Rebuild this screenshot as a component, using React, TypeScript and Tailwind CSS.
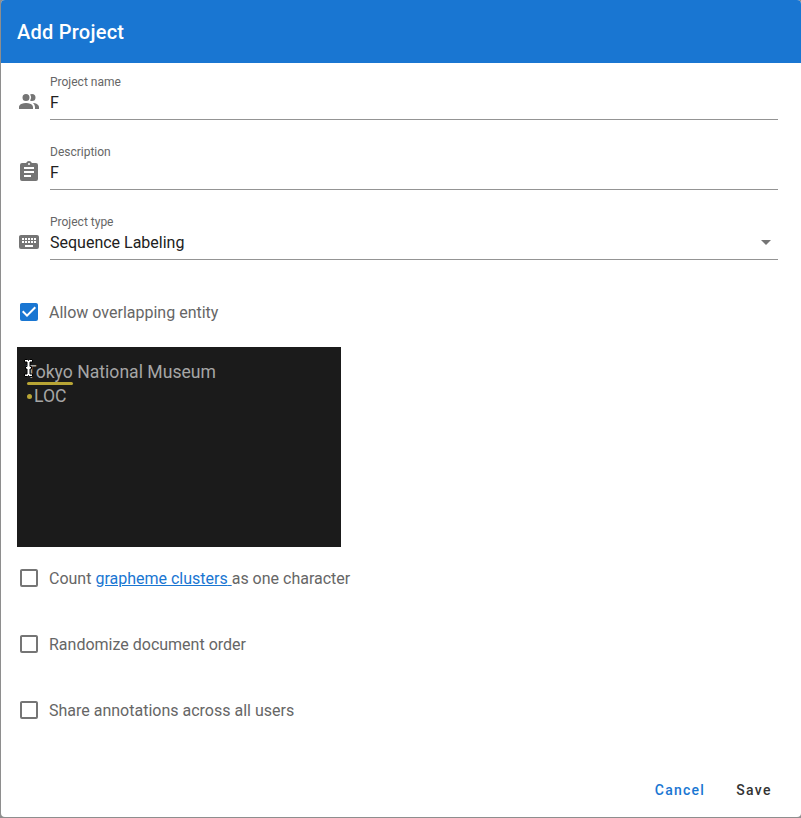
import React from "react";

const ICON = "#757575";

function MdiIcon({ d, color = ICON, size = 24 }: { d: string; color?: string; size?: number }) {
  return (
    <svg width={size} height={size} viewBox="0 0 24 24" className="block">
      <path d={d} fill={color} />
    </svg>
  );
}

const P_ACCOUNTS =
  "M16 17V19H2V17S2 13 9 13 16 17 16 17M12.5 7.5A3.5 3.5 0 1 0 9 11A3.5 3.5 0 0 0 12.5 7.5M15.94 13A5.32 5.32 0 0 1 18 17V19H22V17S22 13.37 15.94 13M15 4A3.39 3.39 0 0 0 13.07 4.59A5 5 0 0 1 13.07 10.41A3.39 3.39 0 0 0 15 11A3.5 3.5 0 0 0 15 4Z";
const P_CLIP =
  "M17,9H7V7H17M17,13H7V11H17M14,17H7V15H14M12,3A1,1 0 0,1 13,4A1,1 0 0,1 12,5A1,1 0 0,1 11,4A1,1 0 0,1 12,3M19,3H14.82C14.4,1.84 13.3,1 12,1C10.7,1 9.6,1.84 9.18,3H5A2,2 0 0,0 3,5V19A2,2 0 0,0 5,21H19A2,2 0 0,0 21,19V5A2,2 0 0,0 19,3Z";
const P_KEYBOARD =
  "M19,10H17V8H19M19,13H17V11H19M16,10H14V8H16M16,13H14V11H16M16,17H8V15H16M7,10H5V8H7M7,13H5V11H7M8,11H10V13H8M8,8H10V10H8M11,11H13V13H11M11,8H13V10H11M20,5H4C2.89,5 2,5.89 2,7V17A2,2 0 0,0 4,19H20A2,2 0 0,0 22,17V7C22,5.89 21.1,5 20,5Z";
const P_CHECKED =
  "M10,17L5,12L6.41,10.58L10,14.17L17.59,6.58L19,8M19,3H5C3.89,3 3,3.89 3,5V19A2,2 0 0,0 5,21H19A2,2 0 0,0 21,19V5C21,3.89 20.1,3 19,3Z";
const P_BLANK =
  "M19,3H5C3.89,3 3,3.89 3,5V19A2,2 0 0,0 5,21H19A2,2 0 0,0 21,19V5C21,3.89 20.1,3 19,3M19,5V19H5V5H19Z";
const P_MENU_DOWN = "M7,10L12,15L17,10H7Z";

function Field({
  icon,
  label,
  value,
  select,
  className,
}: {
  icon: string;
  label: string;
  value: string;
  select?: boolean;
  className?: string;
}) {
  return (
    <div className={"flex " + (className ?? "")}>
      <div className="w-[24px] mr-[9px] pt-[16px]">
        <MdiIcon d={icon} />
      </div>
      <div className="flex-1 flex flex-col">
        <div className="h-[16px] text-[12px] leading-[16px] text-[#666666]">{label}</div>
        <div className="h-[24px] flex items-center">
          <div className="flex-1 text-[16px] leading-[24px] pt-px text-[#212121]">{value}</div>
          {select && <MdiIcon d={P_MENU_DOWN} />}
        </div>
        <div className="h-[5px]" />
        <div className="h-px bg-[#949494]" />
      </div>
    </div>
  );
}

function Check({
  checked,
  children,
  className,
}: {
  checked?: boolean;
  children: React.ReactNode;
  className?: string;
}) {
  return (
    <div className={"flex items-center h-[24px] " + (className ?? "")}>
      <div className="w-[24px] mr-[8px]">
        <MdiIcon d={checked ? P_CHECKED : P_BLANK} color={checked ? "#1976d2" : ICON} />
      </div>
      <div className="text-[16px] leading-[24px] pt-px text-[#666666]">{children}</div>
    </div>
  );
}

export default function App() {
  return (
    <div
      className="w-[801px] h-[818px] bg-[#8e8e8e] pl-px pb-px overflow-hidden"
      style={{ fontFamily: "Roboto, 'Liberation Sans', sans-serif" }}
    >
      <div className="w-[800px] h-[817px] bg-white rounded-[4px] overflow-hidden flex flex-col">
        <div className="h-[63px] bg-[#1976d2] pl-[16px] flex items-center text-white text-[20px] font-medium tracking-[0.0125em]">
          Add Project
        </div>
        <div className="pl-[16px] pr-[23px] flex flex-col">
          <Field icon={P_ACCOUNTS} label="Project name" value="F" className="mt-[11px]" />
          <Field icon={P_CLIP} label="Description" value="F" className="mt-[24px]" />
          <Field icon={P_KEYBOARD} label="Project type" value="Sequence Labeling" select className="mt-[24px]" />

          <Check checked className="mt-[40px]">
            Allow overlapping entity
          </Check>

          <div className="mt-[23px] w-[324px] h-[200px] bg-[#1b1b1b] relative pl-[9px] pt-[13px] text-[17.6px] leading-[24px] text-[#a6a6a6]">
            <div>
              <span className="relative">
                Tokyo
                <span className="absolute left-[1px] right-0 top-[20px] h-[3px] rounded-full bg-[#b8a535]" />
              </span>{" "}
              National Museum
            </div>
            <div className="flex items-center">
              <span className="inline-block w-[5px] h-[5px] rounded-full bg-[#b8a535] ml-[1px] mr-[2px]" />
              <span>LOC</span>
            </div>
            <svg
              className="absolute left-[7px] top-[12px]"
              width="9"
              height="18"
              viewBox="0 0 9 18"
            >
              <path
                d="M0.5 0.5H3.5L4.5 1.5L5.5 0.5H8.5V3H6V7.5H7.5V10H6V15H8.5V17.5H5.5L4.5 16.5L3.5 17.5H0.5V15H3V10H1.5V7.5H3V3H0.5Z"
                fill="#ffffff"
                stroke="#000000"
                strokeWidth="1"
              />
            </svg>
          </div>

          <Check className="mt-[19px]">
            Count{" "}
            <a className="text-[#1976d2] underline" href="#">
              grapheme clusters{" "}
            </a>
            as one character
          </Check>
          <Check className="mt-[42px]">Randomize document order</Check>
          <Check className="mt-[42px]">Share annotations across all users</Check>
        </div>

        <div className="mt-auto mb-[9px] flex justify-end pr-[15px]">
          <button className="h-[36px] w-[82px] text-[14px] font-medium tracking-[0.0892em] text-[#1976d2]">
            Cancel
          </button>
          <button className="h-[36px] w-[64px] ml-px text-[14px] font-medium tracking-[0.0892em] text-[#333333]">
            Save
          </button>
        </div>
      </div>
    </div>
  );
}
